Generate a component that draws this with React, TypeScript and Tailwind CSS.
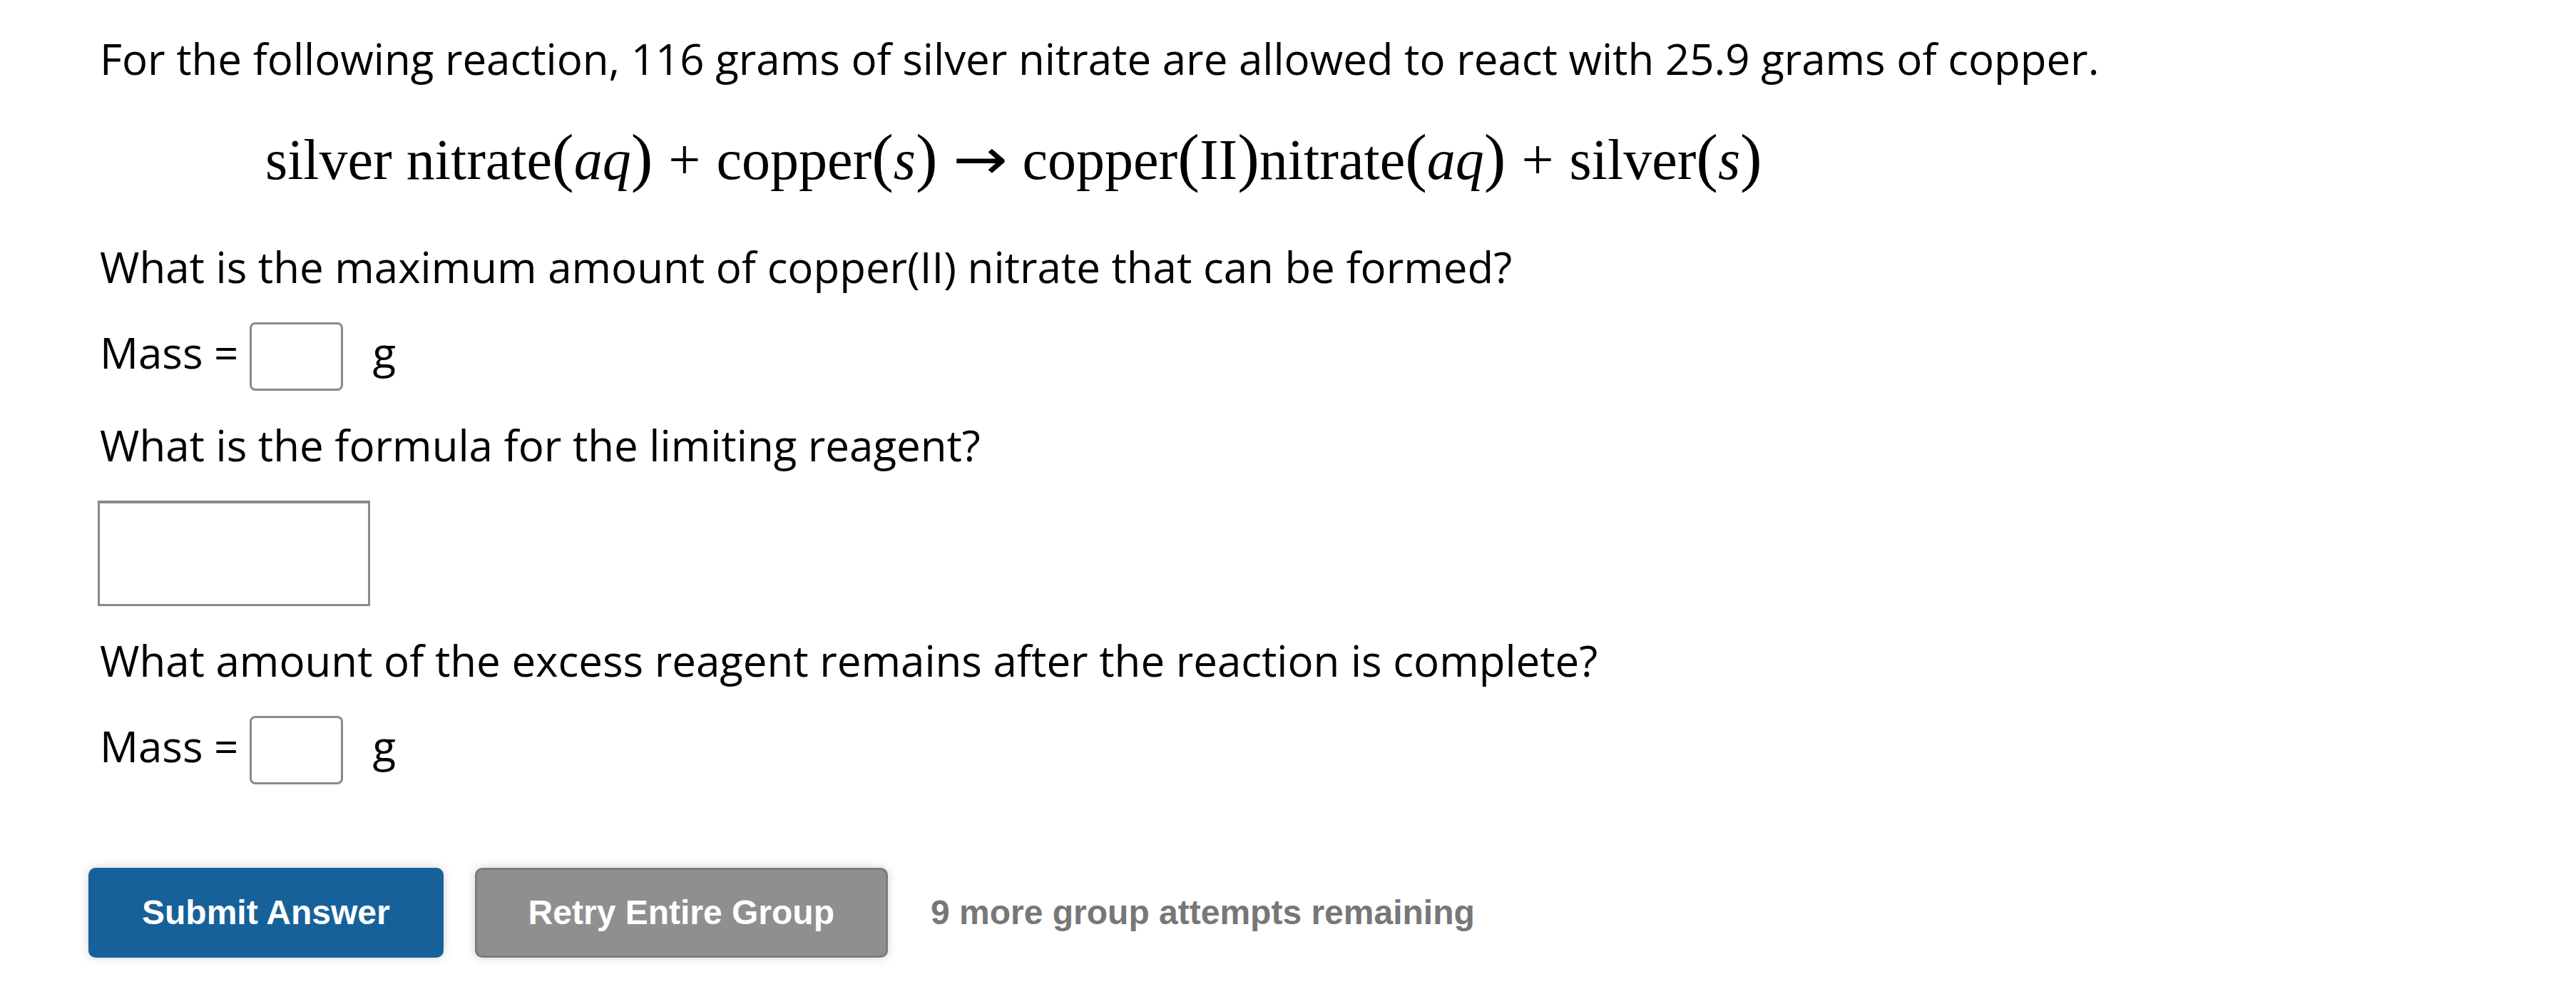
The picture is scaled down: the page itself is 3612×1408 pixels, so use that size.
import React from "react";

const sans = { fontFamily: '"Open Sans", "Noto Sans", sans-serif' };
const serif = { fontFamily: '"Liberation Serif", "DejaVu Serif", serif' };
const arial = { fontFamily: '"Liberation Sans", Arial, sans-serif' };

function P(props: { children: React.ReactNode }) {
  return <span className="text-[92px] leading-[100px]">{props.children}</span>;
}

function Equation() {
  return (
    <div className="ml-[232px] mt-[47px] text-[80px] leading-[100px] text-black whitespace-nowrap" style={serif}>
      <span>silver nitrate</span>
      <P>(</P>
      <i>aq</i>
      <P>)</P>
      <span className="mx-[22px]">+</span>
      <span>copper</span>
      <P>(</P>
      <i>s</i>
      <P>)</P>
      <span className="mx-[26px] inline-block scale-x-[1.15]" style={{ fontFamily: '"DejaVu Sans", sans-serif' }}>→</span>
      <span>copper</span>
      <P>(</P>
      <span>II</span>
      <P>)</P>
      <span>nitrate</span>
      <P>(</P>
      <i>aq</i>
      <P>)</P>
      <span className="mx-[22px]">+</span>
      <span>silver</span>
      <P>(</P>
      <i>s</i>
      <P>)</P>
    </div>
  );
}

function MassRow() {
  return (
    <div className="flex items-start h-[96px]">
      <span className="mt-px leading-[82px]">Mass =</span>
      <input
        type="text"
        className="ml-[16px] w-[131px] h-[96px] border-[3px] border-[#8a8a8a] rounded-[8px] bg-white outline-none"
      />
      <span className="ml-[41px] mt-px leading-[82px]">g</span>
    </div>
  );
}

export default function App() {
  return (
    <main className="min-h-[1408px] w-[3612px] bg-white text-black">
      <div className="pl-[140px] pt-[41px] text-[60px] leading-[82px]" style={sans}>
        <p>For the following reaction, 116 grams of silver nitrate are allowed to react with 25.9 grams of copper.</p>

        <Equation />

        <p className="mt-[59px]">What is the maximum amount of copper(II) nitrate that can be formed?</p>

        <div className="mt-[37px]">
          <MassRow />
        </div>

        <p className="mt-[35px]">What is the formula for the limiting reagent?</p>

        <input
          type="text"
          className="block mt-[37px] -ml-[3px] w-[382px] h-[148px] border-[3px] border-t-[4px] border-[#8a8a8a] bg-white outline-none"
        />

        <p className="mt-[35px]">What amount of the excess reagent remains after the reaction is complete?</p>

        <div className="mt-[37px]">
          <MassRow />
        </div>

        <div className="mt-[117px] -ml-[16px] flex items-center" style={arial}>
          <button className="h-[126px] px-[75px] rounded-[10px] bg-[#17619a] text-white text-[48px] font-bold shadow-[0_0_14px_rgba(0,0,0,0.18)]">
            Submit Answer
          </button>
          <button className="ml-[44px] h-[126px] px-[72px] rounded-[10px] bg-[#8f8f8f] border-[3px] border-[#7c7c7c] text-white text-[48px] font-bold shadow-[0_0_14px_rgba(0,0,0,0.18)]">
            Retry Entire Group
          </button>
          <span className="ml-[60px] text-[48px] font-bold text-[#777777]">9 more group attempts remaining</span>
        </div>
      </div>
    </main>
  );
}
